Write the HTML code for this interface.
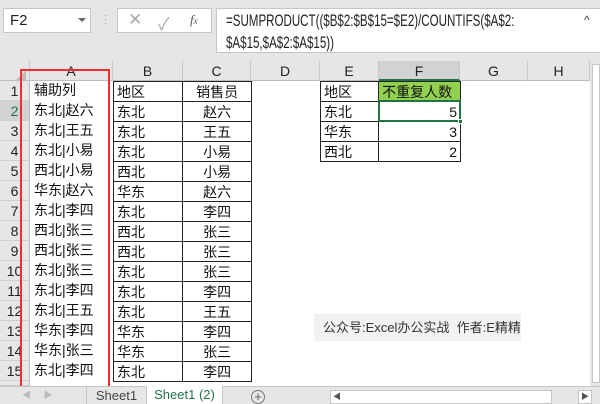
<!DOCTYPE html>
<html><head><meta charset="utf-8"><style>
*{margin:0;padding:0;box-sizing:border-box}
body{width:600px;height:404px;overflow:hidden;background:#e6e6e6;font-family:"Liberation Sans","Noto Sans CJK SC",sans-serif;position:relative}
.abs{position:absolute}
.box{position:absolute;background:#fff;border:1px solid #c6c6c6}
.hdr{position:absolute;top:61px;height:20px;background:#e6e6e6;border-right:1px solid #c8c8c8;border-bottom:1px solid #bdbdbd;font-size:14px;color:#222;text-align:center;line-height:20px}
.rh{position:absolute;left:0;width:30px;height:20px;background:#e6e6e6;border-bottom:1px solid #cfcfcf;border-right:1px solid #bdbdbd;font-size:14px;color:#222;text-align:center;line-height:20px}
.c{position:absolute;height:20px;font-size:14px;line-height:19px;color:#111;white-space:nowrap}
table{position:absolute;border-collapse:collapse}
td{border:1px solid #222;height:20px;font-size:14px;line-height:18px;padding:0 3px;color:#111;white-space:nowrap}
</style></head><body>
<!-- formula bar -->
<div class="box" style="left:3px;top:8px;width:88px;height:25px;"><span class="abs" style="left:6px;top:3px;font-size:15px;color:#222">F2</span><span class="abs" style="left:74px;top:9px;width:0;height:0;border-left:4px solid transparent;border-right:4px solid transparent;border-top:4px solid #666"></span></div>
<div class="abs" style="left:104px;top:14px;color:#999;font-size:10px;line-height:4px">·<br>·<br>·</div>
<div class="box" style="left:117px;top:8px;width:95px;height:25px;">
<span class="abs" style="left:10px;top:1px;font-size:17px;color:#aaa">✕</span>
<span class="abs" style="left:40px;top:1px;font-size:17px;color:#aaa">✓</span>
<span class="abs" style="left:72px;top:3px;font-size:13px;color:#555;font-style:italic;font-family:'Liberation Serif',serif">f<span style="font-size:9px">x</span></span></div>
<div class="box" style="left:216px;top:8px;width:390px;height:45px;border-right:none">
<div class="abs" style="left:9px;top:1px;font-size:17px;line-height:22px;color:#222;white-space:nowrap;transform:scaleX(0.68);transform-origin:0 0">=SUMPRODUCT(($B$2:$B$15=$E2)/COUNTIFS($A$2:<br>$A$15,$A$2:$A$15))</div>
<span class="abs" style="left:367px;top:4px;font-size:12px;color:#444">^</span></div>
<!-- sheet -->
<div class="abs" style="left:0;top:61px;width:590px;height:325px;background:#fff"></div>
<div class="abs" style="left:590px;top:61px;width:10px;height:325px;background:#e6e6e6"></div>
<div class="abs" style="left:592px;top:64px;width:8px;height:319px;background:#fff;border:1px solid #c6c6c6"></div>
<div class="hdr" style="left:0;width:30px"></div>
<div class="abs" style="left:16px;top:70px;width:0;height:0;border-left:10px solid transparent;border-bottom:10px solid #bbb"></div>
<div class="hdr" style="left:30px;width:83px">A</div>
<div class="hdr" style="left:113px;width:70px">B</div>
<div class="hdr" style="left:183px;width:68px">C</div>
<div class="hdr" style="left:251px;width:69px">D</div>
<div class="hdr" style="left:320px;width:59px">E</div>
<div class="hdr" style="left:379px;width:81px;background:#d2d2d2;border-bottom:2px solid #217346">F</div>
<div class="hdr" style="left:460px;width:68px">G</div>
<div class="hdr" style="left:528px;width:62px">H</div>
<div class="rh" style="top:81px">1</div><div class="rh" style="top:101px;background:#d2d2d2;color:#217346">2</div><div class="rh" style="top:121px">3</div><div class="rh" style="top:141px">4</div><div class="rh" style="top:161px">5</div><div class="rh" style="top:181px">6</div><div class="rh" style="top:201px">7</div><div class="rh" style="top:221px">8</div><div class="rh" style="top:241px">9</div><div class="rh" style="top:261px">10</div><div class="rh" style="top:281px">11</div><div class="rh" style="top:301px">12</div><div class="rh" style="top:321px">13</div><div class="rh" style="top:341px">14</div><div class="rh" style="top:361px">15</div><div class="rh" style="top:381px;height:5px;overflow:hidden">16</div>
<!-- col A -->
<div class="c" style="left:34px;top:81px">辅助列</div>
<div class="c" style="left:34px;top:101px">东北|赵六</div>
<div class="c" style="left:34px;top:121px">东北|王五</div>
<div class="c" style="left:34px;top:141px">东北|小易</div>
<div class="c" style="left:34px;top:161px">西北|小易</div>
<div class="c" style="left:34px;top:181px">华东|赵六</div>
<div class="c" style="left:34px;top:201px">东北|李四</div>
<div class="c" style="left:34px;top:221px">西北|张三</div>
<div class="c" style="left:34px;top:241px">西北|张三</div>
<div class="c" style="left:34px;top:261px">东北|张三</div>
<div class="c" style="left:34px;top:281px">东北|李四</div>
<div class="c" style="left:34px;top:301px">东北|王五</div>
<div class="c" style="left:34px;top:321px">华东|李四</div>
<div class="c" style="left:34px;top:341px">华东|张三</div>
<div class="c" style="left:34px;top:361px">东北|李四</div>
<!-- B:C table -->
<table style="left:113px;top:81px;width:139px">
<colgroup><col style="width:70px"><col style="width:69px"></colgroup>
<tr><td>地区</td><td align="center">销售员</td></tr>
<tr><td>东北</td><td align="center">赵六</td></tr>
<tr><td>东北</td><td align="center">王五</td></tr>
<tr><td>东北</td><td align="center">小易</td></tr>
<tr><td>西北</td><td align="center">小易</td></tr>
<tr><td>华东</td><td align="center">赵六</td></tr>
<tr><td>东北</td><td align="center">李四</td></tr>
<tr><td>西北</td><td align="center">张三</td></tr>
<tr><td>西北</td><td align="center">张三</td></tr>
<tr><td>东北</td><td align="center">张三</td></tr>
<tr><td>东北</td><td align="center">李四</td></tr>
<tr><td>东北</td><td align="center">王五</td></tr>
<tr><td>华东</td><td align="center">李四</td></tr>
<tr><td>华东</td><td align="center">张三</td></tr>
<tr><td>东北</td><td align="center">李四</td></tr>
</table>
<!-- E:F table -->
<table style="left:320px;top:81px;width:141px">
<colgroup><col style="width:59px"><col style="width:82px"></colgroup>
<tr><td>地区</td><td style="background:#92d050">不重复人数</td></tr>
<tr><td>东北</td><td align="right">5</td></tr>
<tr><td>华东</td><td align="right">3</td></tr>
<tr><td>西北</td><td align="right">2</td></tr>
</table>
<div class="abs" style="left:378px;top:100px;width:83px;height:22px;border:2px solid #217346"></div>
<div class="abs" style="left:458px;top:119px;width:5px;height:5px;background:#217346;border:1px solid #fff"></div>
<!-- watermark -->
<div class="abs" style="left:314px;top:314px;width:207px;height:27px;background:#f2f2f2;font-size:13px;line-height:27px;color:#333;padding-left:9px;white-space:nowrap">公众号:Excel办公实战&nbsp; 作者:E精精</div>
<!-- red box -->
<div class="abs" style="left:20px;top:69px;width:90px;height:324px;border:2px solid #f03030"></div>
<!-- tabs -->
<div class="abs" style="left:0;top:386px;width:600px;height:18px;background:#e6e6e6;border-top:1px solid #c6c6c6"></div>
<div class="abs" style="left:22px;top:388px;font-size:9px;color:#bbb">◀&nbsp;&nbsp;&nbsp;&nbsp;&nbsp;▶</div>
<div class="abs" style="left:86px;top:387px;width:60px;height:17px;border-left:1px solid #c6c6c6;font-size:13px;color:#444;text-align:center;line-height:17px">Sheet1</div>
<div class="abs" style="left:146px;top:386px;width:77px;height:18px;background:#fff;border-left:1px solid #c6c6c6;border-right:1px solid #c6c6c6;font-size:13px;color:#217346;text-align:center;line-height:17px">Sheet1 (2)</div>
<div class="abs" style="left:251px;top:390px;width:14px;height:14px;border:1px solid #777;border-radius:50%;font-size:13px;line-height:11px;text-align:center;color:#555">+</div>
<div class="abs" style="left:330px;top:390px;width:222px;height:14px;background:#fff;border:1px solid #c6c6c6"></div>
<div class="abs" style="left:333px;top:391px;font-size:8px;color:#555">◀</div>
<div class="abs" style="left:578px;top:390px;width:14px;height:14px;background:#fff;border:1px solid #c6c6c6;font-size:8px;color:#555;text-align:center;line-height:12px">▶</div>
</body></html>
